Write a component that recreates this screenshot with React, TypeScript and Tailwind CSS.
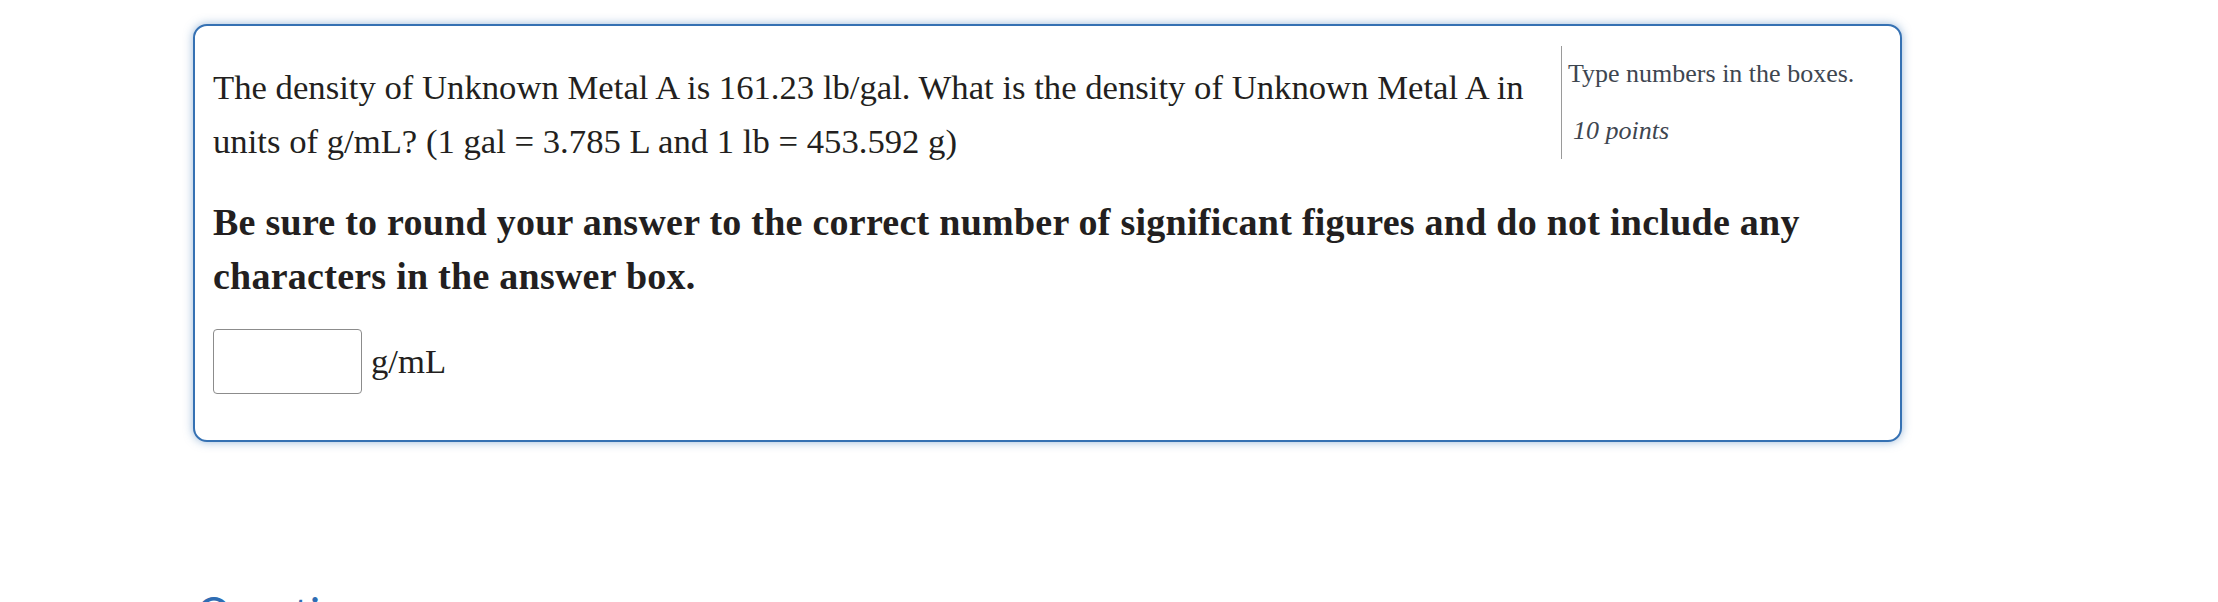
import React from "react";

export default function App() {
  return (
    <div className="min-h-[602px] bg-white pl-[193px] pt-[24px]">
      <div className="w-[1709px] h-[418px] rounded-[14px] border-2 border-[#3571b3] bg-white shadow-[0_0_10px_rgba(53,113,179,0.5)] pl-[18px] pr-[20px] text-[#231f20] [font-family:'Liberation_Serif',serif]">
        <div className="flex">
          <p className="flex-1 pt-[35px] text-[34.7px] leading-[54px] pr-[14px]">
            The density of Unknown Metal A is 161.23 lb/gal. What is the density of Unknown Metal A in units of g/mL? (1 gal = 3.785 L and 1 lb = 453.592 g)
          </p>
          <div className="mt-[20px] h-[113px] w-[319px] flex-none border-l-[1.5px] border-[#9a9a9a] pl-[6px] text-[#3e4650]">
            <div className="pt-[12px] text-[26px] leading-[32px]">Type numbers in the boxes.</div>
            <div className="pt-[25px] pl-[5px] text-[26px] italic leading-[32px]">10 points</div>
          </div>
        </div>
        <p className="mt-[26px] text-[38px] font-bold leading-[54px] tracking-[0.25px]">
          Be sure to round your answer to the correct number of significant figures and do not include any characters in the answer box.
        </p>
        <div className="mt-[26px] flex items-center gap-[9px]">
          <input
            type="text"
            aria-label="answer"
            className="h-[65px] w-[149px] rounded-[4px] border-[1.5px] border-[#8c8c8c] bg-white outline-none"
          />
          <span className="text-[34.7px] leading-[54px]">g/mL</span>
        </div>
      </div>
      <h2 className="mt-[145px] text-[42px] leading-[1.2] text-[#2f6db3] [font-family:Lato,sans-serif] font-normal pl-[4px]">
        Question
      </h2>
    </div>
  );
}
